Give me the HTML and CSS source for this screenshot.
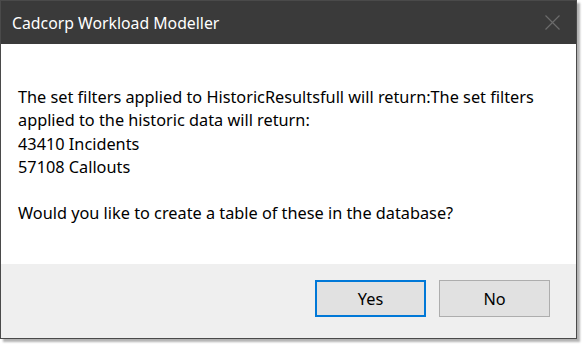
FILE: index.html
```html
<!DOCTYPE html>
<html>
<head>
<meta charset="utf-8">
<link rel="stylesheet" href="styles.css">
</head>
<body>
<div class="window">
  <div class="titlebar">
    <span class="title">Cadcorp Workload Modeller</span>
    <svg class="close" width="15" height="15" viewBox="0 0 15 15"><path d="M0.5 0.5 L14.5 14.5 M14.5 0.5 L0.5 14.5" stroke="#6b6b6b" stroke-width="1.2" fill="none"/></svg>
  </div>
  <div class="content">
    <p class="msg">The set filters applied to HistoricResultsfull will return:The set filters applied to the historic data will return:<br>43410 Incidents<br>57108 Callouts<br><br>Would you like to create a table of these in the database?</p>
  </div>
  <div class="footer">
    <button class="btn default">Yes</button>
    <button class="btn">No</button>
  </div>
</div>
</body>
</html>
```
FILE: styles.css
```css
html, body {
  margin: 0;
  padding: 0;
  background: #ffffff;
}
body {
  width: 584px;
  height: 345px;
  overflow: hidden;
  font-family: "Noto Sans", "Open Sans", sans-serif;
}
.window {
  width: 575px;
  height: 337px;
  border: 1px solid #4a4a4a;
  background: #ffffff;
  box-shadow: 3px 3px 2px rgba(0,0,0,0.3);
  display: flex;
  flex-direction: column;
}
.titlebar {
  height: 43px;
  background: #3a3a3a;
  display: flex;
  align-items: center;
  justify-content: space-between;
  padding: 0 16px 0 11px;
  flex: none;
}
.title {
  color: #ffffff;
  font-size: 15.8px;
}
.close {
  display: block;
}
.content {
  flex: 1;
  padding: 0 17px;
}
.msg {
  margin: 0;
  padding-top: 42px;
  font-size: 16.3px;
  line-height: 23.3px;
  color: #000000;
}
.footer {
  height: 74px;
  background: #efefef;
  display: flex;
  justify-content: flex-end;
  align-items: flex-start;
  gap: 13px;
  padding: 16px 26px 0 0;
  box-sizing: border-box;
  flex: none;
}
.btn {
  width: 111px;
  height: 37px;
  background: #e1e1e1;
  border: 1px solid #adadad;
  font-family: inherit;
  font-size: 16.3px;
  color: #000000;
  padding: 0;
  box-sizing: border-box;
}
.btn.default {
  border: 2px solid #0078d7;
}
```
